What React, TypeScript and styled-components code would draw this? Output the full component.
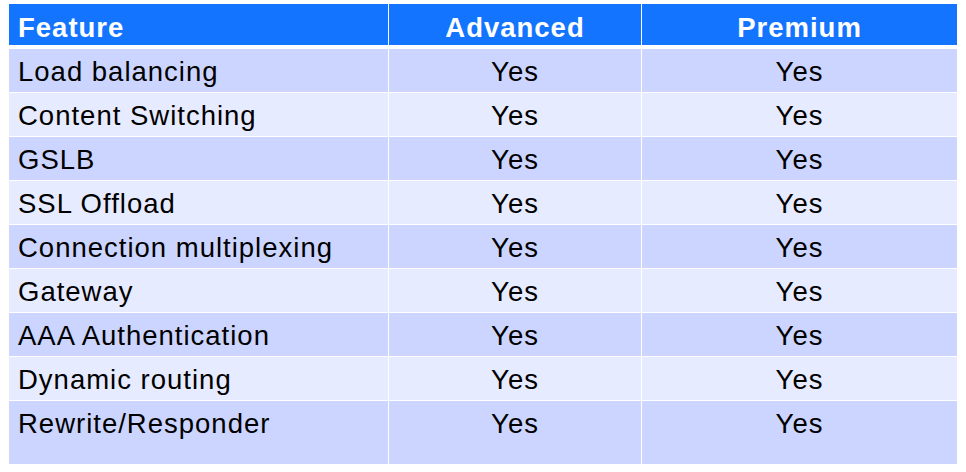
import React from "react";
import styled, { createGlobalStyle } from "styled-components";

const Global = createGlobalStyle`
  html, body { margin: 0; padding: 0; background: #ffffff; }
  body { font-family: "Liberation Sans", Arial, sans-serif; }
`;

const Page = styled.div`
  padding: 4px 0 0 9px;
  width: 948px;
`;

const Table = styled.div`
  display: flex;
  flex-direction: column;
  gap: 1px;
  background: #ffffff;
`;

const Row = styled.div<{ $tall?: boolean; $head?: boolean }>`
  display: grid;
  grid-template-columns: 379px 252px 315px;
  column-gap: 1px;
  height: ${(p) => (p.$head ? "41px" : p.$tall ? "63px" : "43px")};
  margin-bottom: ${(p) => (p.$head ? "3px" : "0")};
`;

const Cell = styled.div<{ $kind: "head" | "odd" | "even"; $center?: boolean }>`
  background: ${(p) =>
    p.$kind === "head" ? "#1374ff" : p.$kind === "odd" ? "#ccd5ff" : "#e7ebff"};
  color: ${(p) => (p.$kind === "head" ? "#ffffff" : "#000000")};
  font-weight: ${(p) => (p.$kind === "head" ? 700 : 400)};
  font-size: 27.5px;
  letter-spacing: 1px;
  line-height: 31px;
  padding: ${(p) => (p.$kind === "head" ? "8px 0 0 9px" : "7px 0 0 9px")};
  text-align: ${(p) => (p.$center ? "center" : "left")};
  ${(p) => (p.$center ? "padding-left: 0;" : "")}
  white-space: nowrap;
  box-sizing: border-box;
`;

const features = [
  "Load balancing",
  "Content Switching",
  "GSLB",
  "SSL Offload",
  "Connection multiplexing",
  "Gateway",
  "AAA Authentication",
  "Dynamic routing",
  "Rewrite/Responder",
];

export default function App() {
  return (
    <>
      <Global />
      <Page>
        <Table>
          <Row $head>
            <Cell $kind="head">Feature</Cell>
            <Cell $kind="head" $center>Advanced</Cell>
            <Cell $kind="head" $center>Premium</Cell>
          </Row>
          {features.map((f, i) => {
            const kind = i % 2 === 0 ? "odd" : "even";
            return (
              <Row key={f} $tall={i === features.length - 1}>
                <Cell $kind={kind}>{f}</Cell>
                <Cell $kind={kind} $center>Yes</Cell>
                <Cell $kind={kind} $center>Yes</Cell>
              </Row>
            );
          })}
        </Table>
      </Page>
    </>
  );
}
